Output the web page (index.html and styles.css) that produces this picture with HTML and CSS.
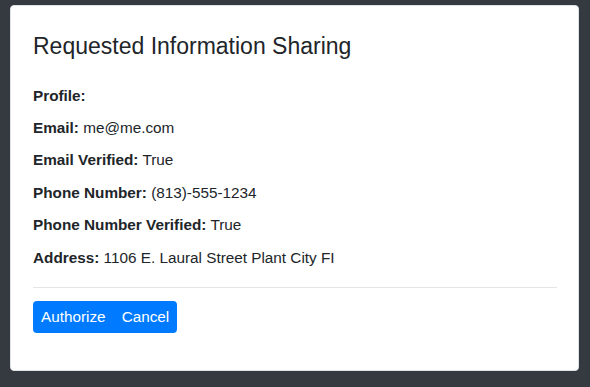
FILE: index.html
```html
<!DOCTYPE HTML>
<html>
<head>
<meta charset="utf-8">
<title>Requested Information Sharing</title>
<link rel="stylesheet" href="styles.css">
</head>
<body>
	<div class="card">
		<h3 class="card-title">Requested Information Sharing</h3>
		<p><b>Profile:</b></p>
		<p><b>Email:</b> me@me.com</p>
		<p><b>Email Verified:</b> True</p>
		<p><b>Phone Number:</b> (813)-555-1234</p>
		<p><b>Phone Number Verified:</b> True</p>
		<p><b>Address:</b> 1106 E. Laural Street Plant City FI</p>
		<hr>
		<div class="btn-group">
			<button class="btn">Authorize</button>
			<button class="btn">Cancel</button>
		</div>
	</div>
</body>
</html>
```

FILE: styles.css
```css
* {margin:0; padding:0; box-sizing:border-box;}
html, body {height:100%;}
body {background:#343a40; font-family:"Liberation Sans", Arial, sans-serif; color:#212529; padding:5px 11px 16px 10px;}
.card {background:#fff; border:1px solid #dee2e6; border-radius:4px; padding:22px 21px 37px 22px; height:366px;}
.card-title {font-size:23px; font-weight:normal; line-height:1.2; margin:5px 0 24px;}
p {font-size:15.3px; line-height:22px; margin-bottom:10.4px;}
b {font-weight:bold;}
hr {border:0; border-top:1px solid #e5e5e5; margin:18px 0 13px;}
.btn-group {display:inline-flex; background:#007bff; border-radius:4px;}
.btn {background:none; border:0; color:#fff; font-family:inherit; font-size:15.3px; line-height:20px; padding:6px 8px; cursor:pointer;}
```
